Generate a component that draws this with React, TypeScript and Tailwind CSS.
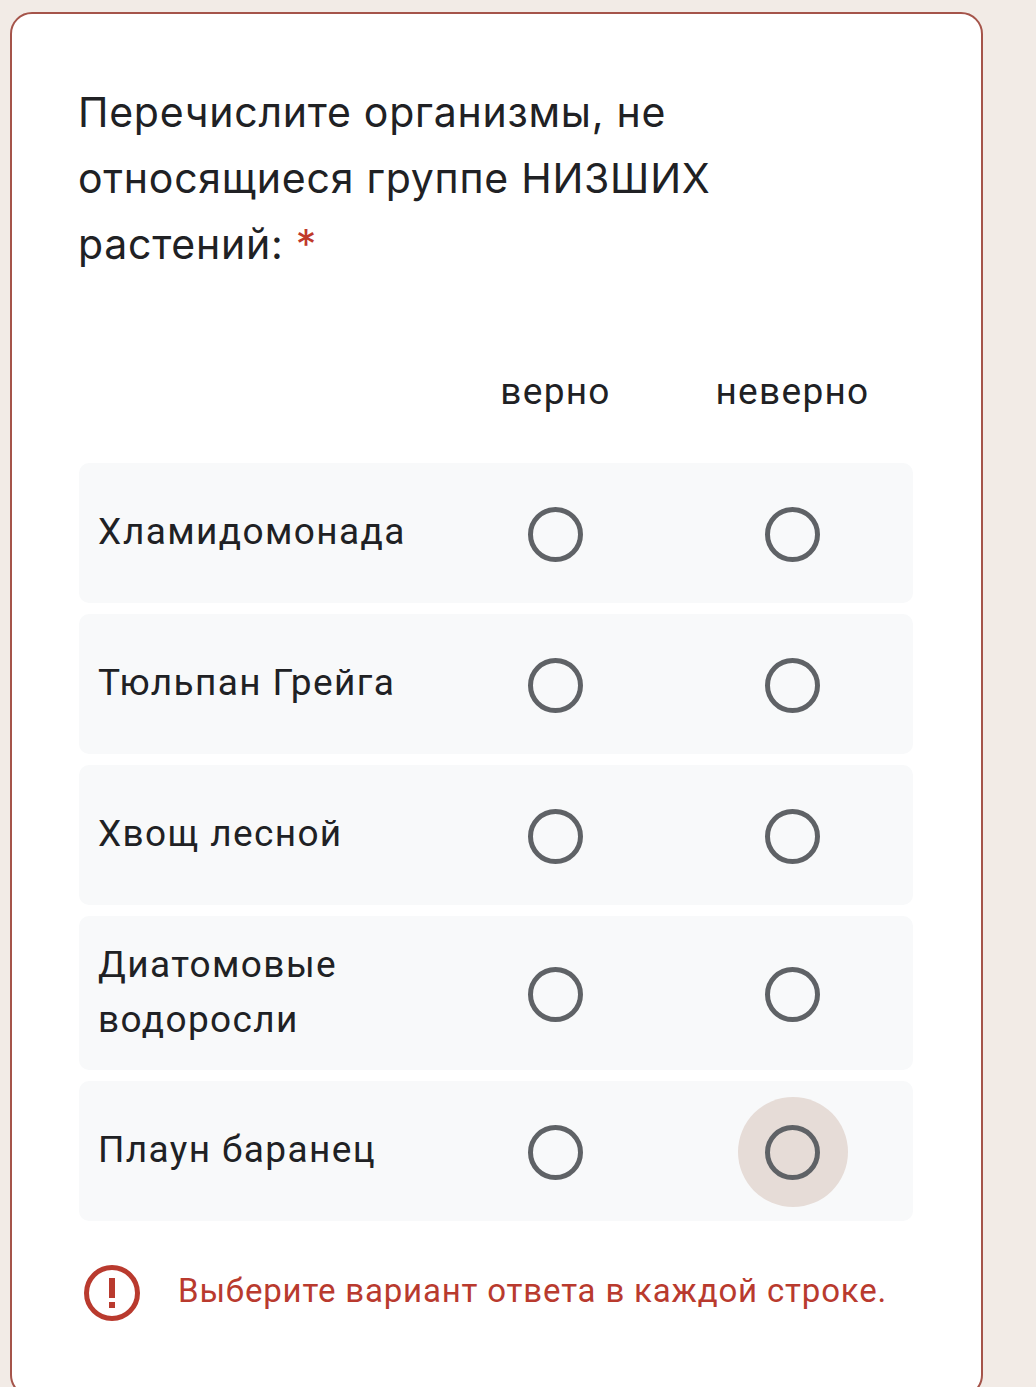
import React from 'react'

const rows = [
  { label: 'Хламидомонада', tall: false },
  { label: 'Тюльпан Грейга', tall: false },
  { label: 'Хвощ лесной', tall: false },
  { label: 'Диатомовые водоросли', tall: true },
  { label: 'Плаун баранец', tall: false },
]

const Radio = ({ hover }: { hover?: boolean }) => (
  <div className="flex w-[237px] shrink-0 items-center justify-center pt-[2px]">
    <div className={`flex h-[110px] w-[110px] items-center justify-center rounded-full ${hover ? 'bg-[#e6dcd7]' : ''}`}>
      <div className="h-[55px] w-[55px] rounded-full border-[5.5px] border-[#5f6266]" />
    </div>
  </div>
)

export default function App() {
  return (
    <div className="h-[1387px] w-[1036px] overflow-hidden bg-[#f2ebe6] pl-[10px] pt-[12px] font-['Roboto',sans-serif]">
      <div className="w-[973px] rounded-[22px] border-2 border-[#a5544a] bg-white pb-[74px] pl-[67px] pr-[68px] pt-[65px]">
        <h1 className="-ml-px font-['Inter',sans-serif] text-[41px] font-normal leading-[66px] tracking-[0.75px] text-[#202124]">
          Перечислите организмы, не
          <br />
          относящиеся группе НИЗШИХ
          <br />
          растений: <span className="text-[#c0392b]">*</span>
        </h1>

        <div className="mt-[77px] flex h-[86px] w-[834px] items-center pb-[10px] pl-[358px] pr-[2px] text-[37px] tracking-[1.3px] text-[#202124]">
          <div className="w-[237px] text-center">верно</div>
          <div className="w-[237px] text-center">неверно</div>
        </div>

        <div className="mt-[23px] flex w-[834px] flex-col gap-[11px]">
          {rows.map((row, i) => (
            <div
              key={row.label}
              className={`flex items-center rounded-[10px] bg-[#f8f9fa] pr-[2px] ${row.tall ? 'h-[154px]' : 'h-[140px]'}`}
            >
              <div className="w-[358px] shrink-0 pb-[3px] pl-[19px] pr-[20px] text-[37px] leading-[55px] tracking-[1.38px] text-[#202124]">
                {row.label}
              </div>
              <Radio />
              <Radio hover={i === 4} />
            </div>
          ))}
        </div>

        <div className="mt-[44px] flex items-center pl-[5px]">
          <svg width="56" height="56" viewBox="0 0 56 56" fill="none" className="shrink-0">
            <circle cx="28" cy="28" r="25.5" stroke="#b93a2e" strokeWidth="5" />
            <rect x="25" y="13" width="6" height="20" fill="#b93a2e" />
            <rect x="25" y="37" width="6" height="6" fill="#b93a2e" />
          </svg>
          <div className="ml-[38px] pb-[4px] text-[33px] tracking-[0.83px] text-[#b93a2e]">
            Выберите вариант ответа в каждой строке.
          </div>
        </div>
      </div>
    </div>
  )
}
